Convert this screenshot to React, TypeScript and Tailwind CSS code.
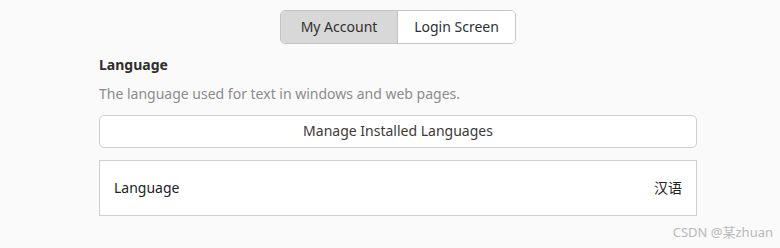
import React, { useState } from 'react';

const font = { fontFamily: '"Noto Sans", "Noto Sans CJK SC", sans-serif' };

export default function App() {
  const [tab, setTab] = useState<'account' | 'login'>('account');

  return (
    <div className="w-[780px] h-[248px] bg-[#fafafa] relative overflow-hidden text-[#303030]" style={font}>
      <div className="pl-[99px] w-[697px]">
        {/* Tabs */}
        <div className="flex justify-center pt-[10px]">
          <div className="flex h-[34px] rounded-[5px] border border-[#c4c4c4] overflow-hidden text-[14px]">
            <button
              onClick={() => setTab('account')}
              className={`w-[117px] pb-[2px] border-r border-[#c4c4c4] ${tab === 'account' ? 'bg-[#d8d8d8]' : 'bg-white'}`}
            >
              My Account
            </button>
            <button
              onClick={() => setTab('login')}
              className={`w-[117px] pb-[2px] ${tab === 'login' ? 'bg-[#d8d8d8]' : 'bg-white'}`}
            >
              Login Screen
            </button>
          </div>
        </div>

        {/* Section */}
        <h2 className="mt-[11px] text-[14px] font-bold leading-[20px] text-[#2e2e2e]">Language</h2>
        <p className="mt-[9px] text-[14px] leading-[20px] text-[#8c8c8c]">
          The language used for text in windows and web pages.
        </p>

        <button className="mt-[11px] w-full h-[33px] pb-[2px] rounded-[5px] border border-[#cfcfcf] bg-white text-[14px] text-[#3a3a3a]">
          Manage Installed Languages
        </button>

        <div className="mt-[12px] h-[56px] pb-[2px] border border-[#cfcfcf] bg-white flex items-center justify-between px-[14px] text-[14px] text-[#222]">
          <span>Language</span>
          <span>汉语</span>
        </div>
      </div>

      <div className="absolute right-[7px] bottom-[6px] text-[13px] text-[#b8b8b8]">CSDN @某zhuan</div>
    </div>
  );
}
